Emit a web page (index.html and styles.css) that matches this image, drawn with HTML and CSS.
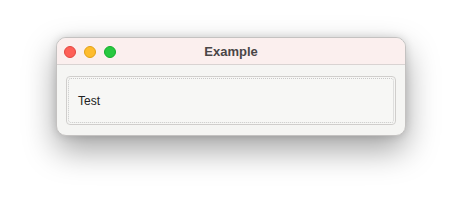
FILE: index.html
```html
<!DOCTYPE html>
<html>
<head>
<meta charset="utf-8">
<link rel="stylesheet" href="styles.css">
</head>
<body>
<div class="window">
  <div class="titlebar">
    <div class="lights">
      <span class="light red"></span>
      <span class="light yellow"></span>
      <span class="light green"></span>
    </div>
    <div class="title">Example</div>
  </div>
  <div class="content">
    <div class="group">
      <div class="group-inner">Test</div>
    </div>
  </div>
</div>
</body>
</html>
```
FILE: styles.css
```css
html, body {
  margin: 0;
  padding: 0;
  background: #ffffff;
}
body {
  padding: 37px 0 0 56px;
  width: 462px;
  height: 210px;
  box-sizing: border-box;
  font-family: "Liberation Sans", Arial, sans-serif;
}
.window {
  width: 350px;
  height: 99px;
  box-sizing: border-box;
  border: 1px solid #c4c2c1;
  border-radius: 10px;
  background: #f5f5f3;
  box-shadow: 0 14px 32px rgba(0,0,0,0.36), 0 0 8px rgba(0,0,0,0.14);
  overflow: hidden;
  display: flex;
  flex-direction: column;
}
.titlebar {
  position: relative;
  height: 27px;
  flex: none;
  box-sizing: border-box;
  background: #fbefee;
  border-bottom: 1px solid #d9d3d2;
  display: flex;
  align-items: center;
  justify-content: center;
}
.lights {
  position: absolute;
  left: 7px;
  top: 8px;
  display: flex;
  gap: 8px;
}
.light {
  width: 12px;
  height: 12px;
  border-radius: 50%;
  box-sizing: border-box;
}
.red { background: #fe5f57; border: 0.5px solid #e2463f; }
.yellow { background: #febc2e; border: 0.5px solid #e1a116; }
.green { background: #28c840; border: 0.5px solid #14ae2a; }
.title {
  font-weight: bold;
  font-size: 13px;
  color: #4a4646;
}
.content {
  padding: 11px 9px 0 9px;
}
.group {
  height: 49px;
  box-sizing: border-box;
  border: 1px solid #d0cecc;
  border-radius: 4px;
  padding: 1px;
  background: #f7f7f5;
}
.group-inner {
  height: 100%;
  box-sizing: border-box;
  border: 1px dotted #c8c8c8;
  border-radius: 3px;
  display: flex;
  align-items: center;
  padding-left: 9px;
  font-size: 12px;
  color: #222222;
}
```
